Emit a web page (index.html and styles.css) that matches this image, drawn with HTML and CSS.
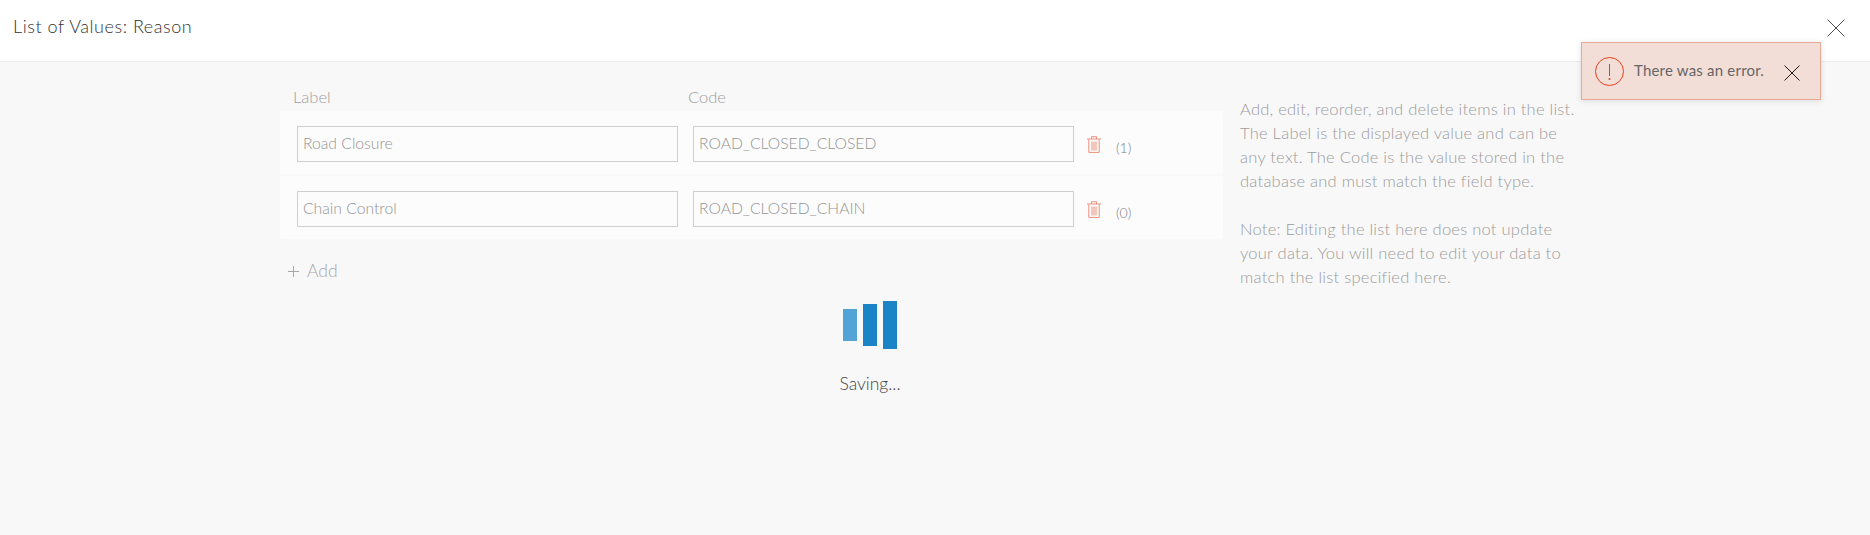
FILE: index.html
```html
<!DOCTYPE html>
<html lang="en">
<head>
  <meta charset="UTF-8" />
  <title>List of Values: Reason</title>
  <link rel="stylesheet" href="styles.css">
</head>
<body>

  <header class="header">
    <h1 class="title">List of Values: Reason</h1>
    <svg class="close" viewBox="0 0 18 18"><path d="M0.5 0.5L17.5 17.5M17.5 0.5L0.5 17.5"/></svg>
  </header>

  <div class="toast">
    <svg class="toast-icon" viewBox="0 0 29 29">
      <circle cx="14.5" cy="14.5" r="14"/>
      <path d="M14.5 7V19"/>
      <circle class="toast-dot" cx="14.5" cy="22" r="1"/>
    </svg>
    <span class="toast-text">There was an error.</span>
    <svg class="toast-close" viewBox="0 0 16 16"><path d="M0.5 0.5L15.5 15.5M15.5 0.5L0.5 15.5"/></svg>
  </div>

  <main class="content">
    <section class="form">
      <div class="heads">
        <span class="head-label">Label</span>
        <span class="head-code">Code</span>
      </div>

      <div class="row">
        <div class="field">Road Closure</div>
        <div class="field">ROAD_CLOSED_CLOSED</div>
        <svg class="trash" viewBox="0 0 14 17">
          <path d="M0 3H14M4.5 3V0.7H9.5V3M1.8 3.5V16.4H12.2V3.5M5 5.5V14.5M7 5.5V14.5M9 5.5V14.5"/>
        </svg>
        <span class="count">(1)</span>
      </div>

      <div class="row">
        <div class="field">Chain Control</div>
        <div class="field">ROAD_CLOSED_CHAIN</div>
        <svg class="trash" viewBox="0 0 14 17">
          <path d="M0 3H14M4.5 3V0.7H9.5V3M1.8 3.5V16.4H12.2V3.5M5 5.5V14.5M7 5.5V14.5M9 5.5V14.5"/>
        </svg>
        <span class="count">(0)</span>
      </div>

      <div class="add">
        <svg class="add-icon" viewBox="0 0 11 11"><path d="M5.5 0V11M0 5.5H11"/></svg>
        <span>Add</span>
      </div>
    </section>

    <aside class="help">
      <p>Add, edit, reorder, and delete items in the list. The Label is the displayed value and can be any text. The Code is the value stored in the database and must match the field type.</p>
      <p>Note: Editing the list here does not update your data. You will need to edit your data to match the list specified here.</p>
    </aside>
  </main>

  <div class="loader">
    <div class="bars">
      <span class="bar bar-1"></span>
      <span class="bar bar-2"></span>
      <span class="bar bar-3"></span>
    </div>
    <div class="loader-text">Saving...</div>
  </div>

</body>
</html>
```

FILE: styles.css
```css
* {
  box-sizing: border-box;
  font-family: 'Lato', sans-serif;
}

html, body {
  height: 100%;
}

body {
  margin: 0;
  background-color: #f8f8f8;
  overflow: hidden;
}

.header {
  display: flex;
  justify-content: space-between;
  height: 62px;
  padding: 19px 25px 0 13px;
  background-color: #fff;
  border-bottom: 1px solid #ebebeb;
}

.title {
  margin: -3px 0 0;
  font-size: 18px;
  line-height: 20px;
  font-weight: 300;
  letter-spacing: 0.55px;
  color: #333;
}

.close {
  width: 18px;
  height: 18px;
  fill: none;
  stroke: #4a4a4a;
  stroke-width: 1;
}

.toast {
  position: absolute;
  top: 42px;
  left: 1581px;
  width: 240px;
  height: 58px;
  display: flex;
  align-items: center;
  padding-left: 13px;
  background-color: #f3ded7;
  border: 1px solid #e9a797;
  box-shadow: 0 1px 6px rgba(0, 0, 0, 0.12);
}

.toast-icon {
  width: 29px;
  height: 29px;
  fill: none;
  stroke: #e4401c;
  stroke-width: 1;
}

.toast-dot {
  fill: #e4401c;
  stroke: none;
}

.toast-text {
  margin: -2px 0 0 10px;
  font-size: 15px;
  letter-spacing: 0.2px;
  color: #666;
}

.toast-close {
  width: 16px;
  height: 16px;
  margin: 3px 0 0 20px;
  fill: none;
  stroke: #1c1c1c;
  stroke-width: 1;
}

.content {
  display: flex;
  padding-left: 280px;
}

.form {
  width: 943px;
}

.heads {
  display: flex;
  height: 49px;
  padding: 25px 0 0 13px;
  font-size: 16.5px;
  line-height: 20px;
  font-weight: 300;
  color: #a0a0a0;
}

.head-label {
  width: 395px;
}

.row {
  display: flex;
  align-items: flex-start;
  height: 63px;
  margin-bottom: 2px;
  padding: 15px 0 0 17px;
  background-color: #fcfcfc;
  border-radius: 2px;
}

.field {
  width: 381px;
  height: 36px;
  margin-right: 15px;
  padding-left: 5px;
  border: 1px solid #cfcfcf;
  font-size: 15.7px;
  line-height: 33px;
  font-weight: 300;
  color: #949494;
  background-color: #fcfcfc;
}

.trash {
  width: 14px;
  height: 17px;
  margin: 10px 0 0 -2px;
  fill: none;
  stroke: #ec8f7c;
  stroke-width: 1;
}

.count {
  margin: 12px 0 0 15px;
  font-size: 14px;
  line-height: 20px;
  font-weight: 300;
  color: #80808f;
}

.add {
  display: flex;
  align-items: center;
  margin: 22px 0 0 8px;
  font-size: 17.5px;
  line-height: 20px;
  font-weight: 300;
  color: #a8a8a8;
}

.add-icon {
  width: 11px;
  height: 11px;
  margin-right: 8px;
  fill: none;
  stroke: #a8a8a8;
  stroke-width: 1;
}

.help {
  width: 340px;
  margin: 35px 0 0 17px;
  font-size: 16.5px;
  line-height: 24px;
  font-weight: 300;
  letter-spacing: 0.25px;
  color: #9c9c9c;
}

.help p {
  margin: 0 0 24px;
}

.loader {
  position: absolute;
  top: 301px;
  left: 810px;
  width: 120px;
  text-align: center;
}

.bars {
  display: flex;
  justify-content: center;
  align-items: center;
  gap: 6px;
  height: 48px;
}

.bar {
  width: 14px;
  background-color: #1a84c7;
}

.bar-1 {
  height: 32px;
  background-color: #54a3d6;
}

.bar-2 {
  height: 42px;
}

.bar-3 {
  height: 48px;
}

.loader-text {
  margin-top: 25px;
  font-size: 17.5px;
  line-height: 20px;
  font-weight: 300;
  color: #444;
}
```
